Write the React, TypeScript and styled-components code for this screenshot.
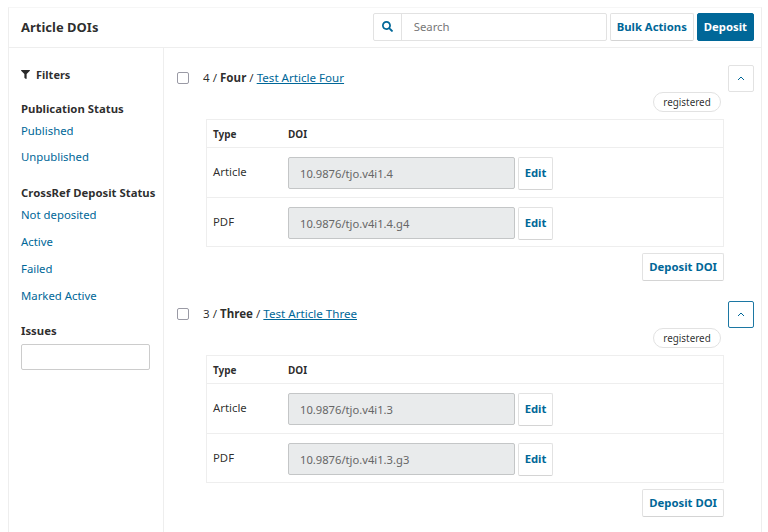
import styled, { createGlobalStyle } from "styled-components";
import { FaFilter, FaSearch } from "react-icons/fa";

const articles = [
  { id: 4, issue: "Four", title: "Test Article Four", focused: false, rows: [["Article", "10.9876/tjo.v4i1.4"], ["PDF", "10.9876/tjo.v4i1.4.g4"]] },
  { id: 3, issue: "Three", title: "Test Article Three", focused: true, rows: [["Article", "10.9876/tjo.v4i1.3"], ["PDF", "10.9876/tjo.v4i1.3.g3"]] },
];

const depositFilters = ["Not deposited", "Active", "Failed", "Marked Active"];

const App = () => (
  <>
    <GlobalStyle />
    <Panel>
      <Header>
        <Title>Article DOIs</Title>
        <SearchBox>
          <SearchIcon>
            <FaSearch size={11} />
          </SearchIcon>
          <SearchText>Search</SearchText>
        </SearchBox>
        <Button>Bulk Actions</Button>
        <PrimaryButton>Deposit</PrimaryButton>
      </Header>
      <Body>
        <Sidebar>
          <FilterTitle>
            <FaFilter size={9} />
            Filters
          </FilterTitle>
          <SideHeading>Publication Status</SideHeading>
          <SideLink>Published</SideLink>
          <SideLink $gap={13}>Unpublished</SideLink>
          <SideHeading $top={21}>CrossRef Deposit Status</SideHeading>
          {depositFilters.map((label, i) => (
            <SideLink key={label} $gap={i === 0 ? 7 : 14}>
              {label}
            </SideLink>
          ))}
          <SideHeading $top={20}>Issues</SideHeading>
          <IssueInput />
        </Sidebar>
        <Main>
          {articles.map((article) => (
            <Article key={article.id}>
              <ArticleTop>
                <Checkbox />
                <ArticleName>
                  {article.id} / <strong>{article.issue}</strong> / <a>{article.title}</a>
                </ArticleName>
                <ToggleButton $focused={article.focused}>
                  <svg width="8" height="5" viewBox="0 0 8 5" fill="none">
                    <path d="M1 4l3-3 3 3" stroke="currentColor" strokeWidth="1" />
                  </svg>
                </ToggleButton>
              </ArticleTop>
              <Details>
                <Badge>registered</Badge>
                <DoiTable>
                  <HeadRow>
                    <TypeCell>Type</TypeCell>
                    <span>DOI</span>
                  </HeadRow>
                  {article.rows.map(([type, doi]) => (
                    <DoiRow key={type}>
                      <TypeLabel>{type}</TypeLabel>
                      <DoiField>{doi}</DoiField>
                      <EditButton>Edit</EditButton>
                    </DoiRow>
                  ))}
                </DoiTable>
                <DepositButton>Deposit DOI</DepositButton>
              </Details>
            </Article>
          ))}
        </Main>
      </Body>
    </Panel>
  </>
);

const GlobalStyle = createGlobalStyle`
  html, body {
    margin: 0;
    height: 532px;
    overflow: hidden;
    background: #fff;
    font-family: "Noto Sans", sans-serif;
    color: rgba(0, 0, 0, 0.84);
  }
`;

const Panel = styled.div`
  margin: 7px 6px 0 8px;
  height: 525px;
  box-sizing: border-box;
  border-left: 1px solid #eee;
  border-right: 1px solid #eee;
  border-top: 1px solid #f6f6f6;
`;

const Header = styled.div`
  display: flex;
  align-items: center;
  height: 40px;
  padding: 0 7px 2px 12px;
  box-sizing: border-box;
  border-bottom: 1px solid #eee;
`;

const Title = styled.div`
  flex: 1;
  font-size: 13px;
  font-weight: 700;
`;

const SearchBox = styled.div`
  display: flex;
  width: 234px;
  height: 28px;
  box-sizing: border-box;
  margin-right: 3px;
  border: 1px solid #e2e2e2;
  border-radius: 2px;
`;

const SearchIcon = styled.div`
  display: flex;
  align-items: center;
  justify-content: center;
  width: 27px;
  border-right: 1px solid #e2e2e2;
  color: #006798;
`;

const SearchText = styled.div`
  padding-left: 12px;
  font-size: 11.35px;
  line-height: 26px;
  color: #777;
`;

const Button = styled.div`
  height: 28px;
  padding: 0 6px;
  margin-right: 3px;
  box-sizing: border-box;
  border: 1px solid #e2e2e2;
  border-bottom-color: #d4d4d4;
  border-radius: 2px;
  background: #fff;
  font-size: 11.3px;
  font-weight: 700;
  line-height: 26px;
  color: #006798;
`;

const PrimaryButton = styled(Button)`
  margin-right: 0;
  border-color: #006798;
  background: #006798;
  color: #fff;
`;

const Body = styled.div`
  display: flex;
  height: 484px;
`;

const Sidebar = styled.div`
  width: 155px;
  box-sizing: border-box;
  padding: 18px 12px 0 12px;
  border-right: 1px solid #eee;
`;

const FilterTitle = styled.div`
  display: flex;
  align-items: center;
  gap: 6px;
  height: 17px;
  font-size: 11px;
  font-weight: 700;
`;

const SideHeading = styled.div<{ $top?: number }>`
  margin-top: ${(p) => p.$top ?? 17}px;
  font-size: 11.35px;
  font-weight: 700;
  line-height: 17px;
  white-space: nowrap;
`;

const SideLink = styled.div<{ $gap?: number }>`
  margin-top: ${(p) => p.$gap ?? 7}px;
  font-size: 11.35px;
  line-height: 13px;
  color: #006798;
`;

const IssueInput = styled.div`
  width: 129px;
  height: 26px;
  margin-top: 5px;
  box-sizing: border-box;
  border: 1px solid #ccc;
  border-radius: 2px;
`;

const Main = styled.div`
  flex: 1;
  padding: 17px 7px 0 13px;
`;

const Article = styled.div`
  margin-bottom: 20px;
`;

const ArticleTop = styled.div`
  display: flex;
  align-items: flex-start;
  height: 27px;
`;

const Checkbox = styled.div`
  width: 12px;
  height: 12px;
  margin-top: 7px;
  box-sizing: border-box;
  border: 1px solid #9a9aa5;
  border-radius: 2px;
`;

const ArticleName = styled.div`
  flex: 1;
  margin-left: 14px;
  font-size: 11.6px;
  line-height: 25px;

  strong {
    font-weight: 700;
  }

  a {
    color: #006798;
    text-decoration: underline;
  }
`;

const ToggleButton = styled.div<{ $focused: boolean }>`
  display: flex;
  align-items: center;
  justify-content: center;
  width: 26px;
  height: 27px;
  box-sizing: border-box;
  border: 1px solid ${(p) => (p.$focused ? "#1c77a3" : "#e2e2e2")};
  border-radius: 2px;
  color: #006798;
`;

const Details = styled.div`
  display: flex;
  flex-direction: column;
  align-items: flex-end;
  width: 518px;
  margin-left: 29px;
`;

const Badge = styled.div`
  width: 68px;
  height: 20px;
  margin-right: 3px;
  box-sizing: border-box;
  border: 1px solid #e2e2e2;
  border-radius: 10px;
  font-size: 9.9px;
  line-height: 18px;
  text-align: center;
`;

const DoiTable = styled.div`
  width: 100%;
  margin-top: 7px;
  box-sizing: border-box;
  border: 1px solid #eee;
`;

const HeadRow = styled.div`
  display: flex;
  align-items: center;
  height: 27px;
  padding-left: 6px;
  font-size: 10px;
  font-weight: 700;
`;

const TypeCell = styled.span`
  width: 75px;
`;

const DoiRow = styled.div`
  display: flex;
  align-items: flex-start;
  height: 50px;
  padding: 9px 0 0 6px;
  box-sizing: border-box;
  border-top: 1px solid #eee;
  font-size: 11.35px;

  &:last-child {
    height: 49px;
  }
`;

const TypeLabel = styled.span`
  width: 75px;
  line-height: 30px;
`;

const DoiField = styled.div`
  width: 227px;
  height: 32px;
  box-sizing: border-box;
  padding-left: 11px;
  border: 1px solid #c4c6c7;
  border-radius: 2px;
  background: #e9ebec;
  font-size: 11.2px;
  line-height: 31px;
  color: #666;
`;

const EditButton = styled(Button)`
  width: 35px;
  height: 33px;
  margin: 0 0 0 3px;
  padding: 0;
  text-align: center;
  line-height: 30px;
`;

const DepositButton = styled(Button)`
  margin: 6px 0 0;
`;

export default App;
